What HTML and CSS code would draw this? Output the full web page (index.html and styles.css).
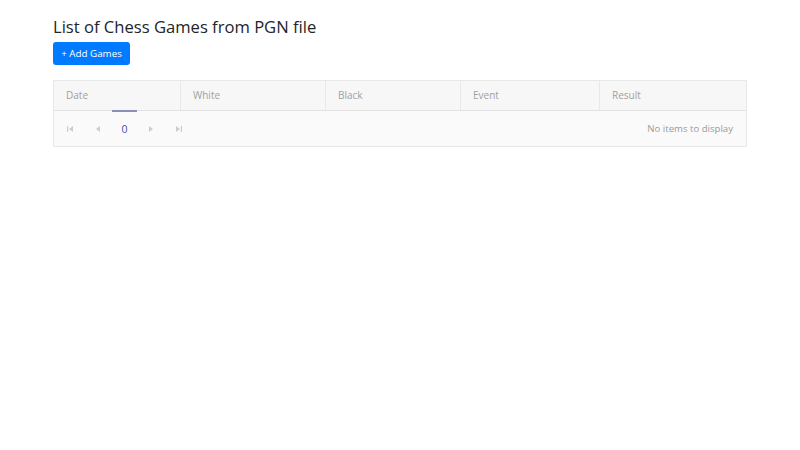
FILE: index.html
```html
<!DOCTYPE html>
<html>
<head>
<meta charset="utf-8">
<link rel="stylesheet" href="styles.css">
</head>
<body>
<div class="container">
  <h1 class="title">List of Chess Games from PGN file</h1>
  <button class="btn">+ Add Games</button>
  <div class="grid">
    <div class="grid-header">
      <div class="th c1">Date</div>
      <div class="th c2">White</div>
      <div class="th c3">Black</div>
      <div class="th c4">Event</div>
      <div class="th c5">Result</div>
    </div>
    <div class="pager">
      <div class="pager-nav">
        <span class="pg-btn">
          <svg width="6" height="6" viewBox="0 0 6 6"><rect x="0" y="0" width="1.2" height="6" fill="#cdcdcd"/><path d="M6 0 L2 3 L6 6 Z" fill="#cdcdcd"/></svg>
        </span>
        <span class="pg-btn">
          <svg width="4" height="6" viewBox="0 0 4 6"><path d="M4 0 L0 3 L4 6 Z" fill="#cdcdcd"/></svg>
        </span>
        <span class="pg-num">0</span>
        <span class="pg-btn">
          <svg width="4" height="6" viewBox="0 0 4 6"><path d="M0 0 L4 3 L0 6 Z" fill="#cdcdcd"/></svg>
        </span>
        <span class="pg-btn">
          <svg width="6" height="6" viewBox="0 0 6 6"><path d="M0 0 L4 3 L0 6 Z" fill="#cdcdcd"/><rect x="4.8" y="0" width="1.2" height="6" fill="#cdcdcd"/></svg>
        </span>
      </div>
      <div class="pager-info">No items to display</div>
    </div>
  </div>
</div>
</body>
</html>
```
FILE: styles.css
```css
html, body {
  margin: 0;
  padding: 0;
  background: #ffffff;
  font-family: "Open Sans", "Noto Sans", sans-serif;
}
.container {
  width: 694px;
  margin: 0 auto;
  padding-top: 14px;
}
.title {
  margin: 0;
  font-size: 16.6px;
  font-weight: 400;
  color: #212529;
  line-height: 26px;
}
.btn {
  display: block;
  margin-top: 2px;
  height: 23px;
  width: 77px;
  padding: 0;
  border: none;
  border-radius: 3px;
  background: #007bff;
  color: #ffffff;
  font-family: "Open Sans", "Noto Sans", sans-serif;
  font-size: 9.8px;
  line-height: 23px;
}
.grid {
  margin-top: 15px;
  border: 1px solid #e8e8e8;
}
.grid-header {
  display: flex;
  height: 29px;
  background: #f7f7f7;
  border-bottom: 1px solid #e2e2e2;
}
.th {
  box-sizing: border-box;
  padding-left: 12px;
  font-size: 10px;
  line-height: 29px;
  color: #a0a0a0;
  border-left: 1px solid #e8e8e8;
}
.c1 { width: 126px; border-left: none; }
.c2 { width: 145px; }
.c3 { width: 135px; }
.c4 { width: 139px; }
.c5 { flex: 1; }
.pager {
  display: flex;
  align-items: center;
  justify-content: space-between;
  height: 35px;
  background: #fafafa;
}
.pager-nav {
  display: flex;
  align-items: center;
  height: 100%;
  padding-left: 2px;
}
.pg-btn {
  display: flex;
  align-items: center;
  justify-content: center;
  width: 28px;
  height: 100%;
}
.pg-num {
  position: relative;
  width: 25px;
  height: 100%;
  display: flex;
  align-items: center;
  justify-content: center;
  font-size: 10.5px;
  color: #3f51b5;
}
.pg-num::before {
  content: "";
  position: absolute;
  top: -1px;
  left: 0;
  right: 0;
  height: 2px;
  background: #8a90b8;
}
.pager-info {
  padding-right: 13px;
  font-size: 9.6px;
  color: #9a9a9a;
}
```
